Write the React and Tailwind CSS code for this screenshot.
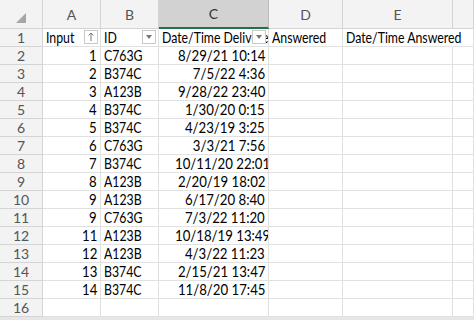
import React from 'react';

const rows = [
  [1, 'C763G', '8/29/21 10:14'],
  [2, 'B374C', '7/5/22 4:36'],
  [3, 'A123B', '9/28/22 23:40'],
  [4, 'B374C', '1/30/20 0:15'],
  [5, 'B374C', '4/23/19 3:25'],
  [6, 'C763G', '3/3/21 7:56'],
  [7, 'B374C', '10/11/20 22:01'],
  [8, 'A123B', '2/20/19 18:02'],
  [9, 'A123B', '6/17/20 8:40'],
  [9, 'C763G', '7/3/22 11:20'],
  [11, 'A123B', '10/18/19 13:49'],
  [12, 'A123B', '4/3/22 11:23'],
  [13, 'B374C', '2/15/21 13:47'],
  [14, 'B374C', '11/8/20 17:45'],
];

const cols = 'grid grid-cols-[43px_58px_58px_110px_74px_110px_1fr]';
const base = 'flex h-[18px] border-b border-[#e1e1e1] px-[3px] leading-[17px] whitespace-nowrap';
const cell = `${base} border-r overflow-hidden`;
const head = 'h-[18px] border-r border-b border-[#d4d4d4] bg-[#f3f3f3] text-center text-[14px] leading-[17px] text-[#555]';

// calibri-ish narrow text
const L = ({ children }) => <span className="inline-block origin-left scale-x-[0.82]">{children}</span>;
const R = ({ children }) => <span className="ml-auto inline-block origin-right scale-x-[0.88]">{children}</span>;

const FilterBtn = ({ sorted }) => (
  <span className="absolute right-[2px] top-[1px] flex h-[14px] w-[14px] items-center justify-center border border-[#c9c9c9] bg-white">
    {sorted ? (
      <svg width="8" height="10" viewBox="0 0 8 10">
        <path d="M4 1v8M1.5 3.5L4 1l2.5 2.5" stroke="#777" strokeWidth="1" fill="none" />
      </svg>
    ) : (
      <svg width="6" height="4" viewBox="0 0 6 4">
        <path d="M0 0h6L3 4z" fill="#777" />
      </svg>
    )}
  </span>
);

export default function App() {
  return (
    <div className="h-[320px] w-[474px] overflow-hidden bg-white text-[15px] text-black" style={{ fontFamily: 'Lato, "Liberation Sans", sans-serif' }}>
      {/* column headers */}
      <div className={`${cols} h-[29px] text-[14px] text-[#555]`}>
        <div className="relative border-r border-b border-[#d4d4d4] bg-[#f3f3f3]">
          <svg className="absolute left-[16px] top-[13px]" width="10" height="10" viewBox="0 0 10 10">
            <path d="M10 0V10H0z" fill="#a6a6a6" />
          </svg>
        </div>
        {['A', 'B'].map(c => (
          <div key={c} className="flex items-center justify-center border-r border-b border-[#d4d4d4] bg-[#f3f3f3]">{c}</div>
        ))}
        <div className="flex items-center justify-center border-r border-[#bdbdbd] border-b-2 border-b-[#217346] bg-[#d2d2d2] text-[#333]">C</div>
        {['D', 'E', ''].map((c, i) => (
          <div key={i} className="flex items-center justify-center border-r border-b border-[#d4d4d4] bg-[#f3f3f3]">{c}</div>
        ))}
      </div>

      {/* header row */}
      <div className={cols}>
        <div className={head}>1</div>
        <div className={`${cell} relative`}><L>Input</L><FilterBtn sorted /></div>
        <div className={`${cell} relative`}><L>ID</L><FilterBtn /></div>
        <div className={`${cell} relative`}><L>Date/Time Delivered</L><FilterBtn /></div>
        <div className={cell}><L>Answered</L></div>
        {/* text spills into the empty cell on its right */}
        <div className={`${base} border-r border-r-transparent overflow-visible`}><L>Date/Time Answered</L></div>
        <div className={cell}></div>
      </div>

      {rows.map((r, i) => (
        <div key={i} className={cols}>
          <div className={head}>{i + 2}</div>
          <div className={cell}><R>{r[0]}</R></div>
          <div className={cell}><L>{r[1]}</L></div>
          <div className={cell}><R>{r[2]}</R></div>
          <div className={cell}></div>
          <div className={cell}></div>
          <div className={cell}></div>
        </div>
      ))}

      <div className={cols}>
        <div className={head}>16</div>
        {[0, 1, 2, 3, 4, 5].map(k => <div key={k} className={cell}></div>)}
      </div>
      <div className="h-[3px] bg-[#e6e6e6]"></div>
    </div>
  );
}
